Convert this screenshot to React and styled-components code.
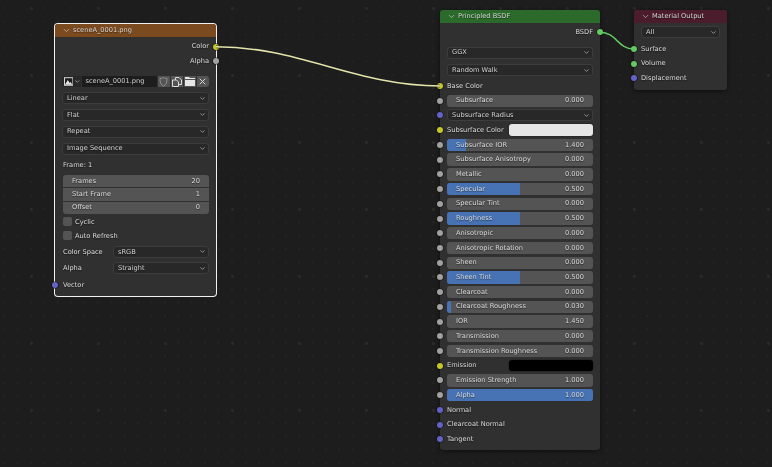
import React from "react";
import styled, { createGlobalStyle } from "styled-components";
import { ChevronDown } from "lucide-react";

const socketColors = { yellow: "#c7c729", grey: "#a1a1a1", blue: "#6363c7", green: "#63c763" };

const GlobalStyle = createGlobalStyle`
  html, body { margin: 0; padding: 0; background: #1d1d1d; }
  body { font-family: "DejaVu Sans", sans-serif; }
`;

const Canvas = styled.div`
  position: relative;
  width: 772px;
  height: 467px;
  overflow: hidden;
  background-color: #1d1d1d;
  background-image:
    radial-gradient(circle at 1.5px 1.5px, #2a2a2a 1.3px, transparent 1.6px),
    radial-gradient(circle at 1px 1px, #242424 0.9px, transparent 1.2px);
  background-size: 67px 67px, 13.4px 13.4px;
  background-position: 30px 7px, 3.4px 7px;
`;

const Wires = styled.svg`
  position: absolute;
  inset: 0;
  pointer-events: none;
`;

const Node = styled.div`
  position: absolute;
  left: ${(p) => p.$x}px;
  top: ${(p) => p.$y}px;
  width: ${(p) => p.$w}px;
  height: ${(p) => p.$h}px;
  box-sizing: border-box;
  background: #303030;
  border-radius: 3px;
  box-shadow: ${(p) => (p.$selected ? "0 0 0 1px #f2f2f2" : "0 1px 4px rgba(0,0,0,.55)")};
  color: #dcdcdc;
  font-size: 6.65px;
  line-height: 1;
  white-space: nowrap;
  text-shadow: 0 1px 1px rgba(0, 0, 0, 0.5);
  filter: blur(0.25px);
`;

const Header = styled.div`
  display: flex;
  align-items: center;
  gap: 2px;
  height: 13px;
  padding-left: 7px;
  background: ${(p) => p.$color};
  border-radius: 3px 3px 0 0;
  color: #d8d8d8;
`;

const Body = styled.div`
  display: flex;
  flex-direction: column;
  padding: ${(p) => p.$pad || "0"};
`;

const Row = styled.div`
  position: relative;
  display: flex;
  align-items: center;
  height: ${(p) => p.$h || 14.72}px;
  box-sizing: border-box;
  padding: 0 7px;
  flex: none;
  justify-content: ${(p) => (p.$right ? "flex-end" : "flex-start")};
`;

const Gap = styled.div`
  height: ${(p) => p.$h}px;
  flex: none;
`;

const Socket = styled.span`
  position: absolute;
  top: 50%;
  ${(p) => (p.$side === "right" ? "right: -3px;" : "left: -3px;")}
  width: 6px;
  height: 6px;
  margin-top: -3px;
  border-radius: 50%;
  background: ${(p) => socketColors[p.$color]};
  box-shadow: 0 0 0 0.6px #111;
  z-index: 2;
`;

const Dropdown = styled.div`
  flex: 1;
  display: flex;
  align-items: center;
  justify-content: space-between;
  height: 12px;
  padding: 0 2px 0 4px;
  background: #282828;
  border: 1px solid #3c3c3c;
  border-radius: 3px;
  box-sizing: border-box;
  color: #d4d4d4;
`;

const Field = styled.div`
  position: relative;
  flex: 1;
  display: flex;
  align-items: center;
  justify-content: space-between;
  height: 12.3px;
  padding: 0 9px;
  background: #545454;
  border-radius: 3px;
  overflow: hidden;
  color: #dcdcdc;
`;

const Fill = styled.span`
  position: absolute;
  left: 0;
  top: 0;
  bottom: 0;
  background: #4772b3;
`;

const FieldText = styled.span`
  position: relative;
  white-space: nowrap;
`;

const Swatch = styled.div`
  width: 84px;
  height: 11.5px;
  margin-left: auto;
  border-radius: 3px;
  background: ${(p) => p.$color};
  box-shadow: 0 0 0 0.5px #222;
`;

const ImageBar = styled.div`
  flex: 1;
  display: flex;
  align-items: stretch;
  height: 11.5px;
  gap: 0.5px;
`;

const ImagePick = styled.div`
  width: 19px;
  flex: none;
  display: flex;
  align-items: center;
  gap: 1px;
  padding-left: 2px;
  box-sizing: border-box;
  background: #282828;
  border-radius: 3px 0 0 3px;
`;

const ImageName = styled.div`
  flex: 1;
  display: flex;
  align-items: center;
  padding-left: 4px;
  background: #1d1d1d;
  color: #d4d4d4;
`;

const IconButton = styled.div`
  width: 12.5px;
  flex: none;
  display: flex;
  align-items: center;
  justify-content: center;
  background: #545454;
  border-radius: ${(p) => (p.$last ? "0 3px 3px 0" : "0")};
`;

const FrameLabel = styled(Row)`
  padding-left: 8px;
`;

const Stack = styled.div`
  display: flex;
  flex-direction: column;
  gap: 1px;
  margin: 2px 7px 1px 8px;
  border-radius: 3px;
  overflow: hidden;
`;

const StackField = styled(Field)`
  flex: none;
  border-radius: 0;
`;

const Check = styled.span`
  width: 9px;
  height: 9px;
  margin: 0 3px 0 0;
  background: #545454;
  border-radius: 2px;
`;

const PropLabel = styled.span`
  width: 50px;
  flex: none;
`;

const Caret = () => <ChevronDown size={7} strokeWidth={2} color="#d8d8d8" />;
const HeadCaret = () => <ChevronDown size={9} strokeWidth={1.6} color="#d8d8d8" />;

const Select = ({ children }) => (
  <Dropdown>
    <span>{children}</span>
    <Caret />
  </Dropdown>
);

const Slider = ({ label, value, fill }) => (
  <Field>
    {fill ? <Fill style={{ width: `${fill * 100}%` }} /> : null}
    <FieldText>{label}</FieldText>
    <FieldText>{value}</FieldText>
  </Field>
);

const ImageIcon = () => (
  <svg width="10" height="9" viewBox="0 0 10 9">
    <rect x="0.5" y="0.5" width="9" height="8" fill="#1d1d1d" stroke="#e6e6e6" />
    <path d="M1 8 L4 3 L6 6 L7 5 L9 8 Z" fill="#e6e6e6" />
  </svg>
);

const ShieldIcon = () => (
  <svg width="9" height="10" viewBox="0 0 9 10">
    <path d="M1 1.5 Q3 1.5 4.5 .7 Q6 1.5 8 1.5 Q8.3 7 4.5 9.2 Q.7 7 1 1.5 Z" fill="none" stroke="#8f8f8f" />
  </svg>
);

const CopyIcon = () => (
  <svg width="10" height="10" viewBox="0 0 10 10">
    <path d="M3.5 .5 H7 L9.5 3 V7.5 H6.5 M3.5 .5 V3" fill="none" stroke="#dcdcdc" />
    <path d="M.5 3 H4.5 L6.5 5 V9.5 H.5 Z" fill="none" stroke="#dcdcdc" />
  </svg>
);

const FolderIcon = () => (
  <svg width="10" height="9" viewBox="0 0 10 9">
    <path d="M0 0 H4 L5 1 H10 V2 H0 Z M0 3 H10 V9 H0 Z" fill="#e6e6e6" />
  </svg>
);

const CloseIcon = () => (
  <svg width="7" height="7" viewBox="0 0 7 7">
    <path d="M.7 .7 L6.3 6.3 M6.3 .7 L.7 6.3" stroke="#d8d8d8" strokeWidth="1" />
  </svg>
);

const bsdfRows = [
  { socket: "grey", label: "Subsurface", value: "0.000" },
  { socket: "blue", select: "Subsurface Radius" },
  { socket: "yellow", label: "Subsurface Color", swatch: "#e6e6e6" },
  { socket: "grey", label: "Subsurface IOR", value: "1.400", fill: 0.13 },
  { socket: "grey", label: "Subsurface Anisotropy", value: "0.000" },
  { socket: "grey", label: "Metallic", value: "0.000" },
  { socket: "grey", label: "Specular", value: "0.500", fill: 0.5 },
  { socket: "grey", label: "Specular Tint", value: "0.000" },
  { socket: "grey", label: "Roughness", value: "0.500", fill: 0.5 },
  { socket: "grey", label: "Anisotropic", value: "0.000" },
  { socket: "grey", label: "Anisotropic Rotation", value: "0.000" },
  { socket: "grey", label: "Sheen", value: "0.000" },
  { socket: "grey", label: "Sheen Tint", value: "0.500", fill: 0.5 },
  { socket: "grey", label: "Clearcoat", value: "0.000" },
  { socket: "grey", label: "Clearcoat Roughness", value: "0.030", fill: 0.03 },
  { socket: "grey", label: "IOR", value: "1.450" },
  { socket: "grey", label: "Transmission", value: "0.000" },
  { socket: "grey", label: "Transmission Roughness", value: "0.000" },
  { socket: "yellow", label: "Emission", swatch: "#000000" },
  { socket: "grey", label: "Emission Strength", value: "1.000" },
  { socket: "grey", label: "Alpha", value: "1.000", fill: 1 },
  { socket: "blue", text: "Normal" },
  { socket: "blue", text: "Clearcoat Normal" },
  { socket: "blue", text: "Tangent" },
];

const BsdfRow = ({ row }) => {
  let content;
  if (row.select) content = <Select>{row.select}</Select>;
  else if (row.swatch) content = (
    <>
      <span>{row.label}</span>
      <Swatch $color={row.swatch} />
    </>
  );
  else if (row.text) content = <span>{row.text}</span>;
  else content = <Slider label={row.label} value={row.value} fill={row.fill} />;
  return (
    <Row>
      <Socket $color={row.socket} />
      {content}
    </Row>
  );
};

export default function App() {
  return (
    <Canvas>
      <GlobalStyle />
      <Node $x={55} $y={24} $w={161} $h={271.5} $selected>
        <Header $color="#7b4a1e">
          <HeadCaret />
          sceneA_0001.png
        </Header>
        <Body $pad="2.5px 0 0">
          <Row $right $h={14.5}>Color<Socket $side="right" $color="yellow" /></Row>
          <Row $right $h={14.5}>Alpha<Socket $side="right" $color="grey" /></Row>
          <Gap $h={4.75} />
          <Row $h={16.5}>
            <ImageBar>
              <ImagePick><ImageIcon /><Caret /></ImagePick>
              <ImageName>sceneA_0001.png</ImageName>
              <IconButton><ShieldIcon /></IconButton>
              <IconButton><CopyIcon /></IconButton>
              <IconButton><FolderIcon /></IconButton>
              <IconButton $last><CloseIcon /></IconButton>
            </ImageBar>
          </Row>
          <Row $h={16.8}><Select>Linear</Select></Row>
          <Row $h={16.8}><Select>Flat</Select></Row>
          <Row $h={16.8}><Select>Repeat</Select></Row>
          <Row $h={16.8}><Select>Image Sequence</Select></Row>
          <FrameLabel $h={16}>Frame: 1</FrameLabel>
          <Stack>
            <StackField><FieldText>Frames</FieldText><FieldText>20</FieldText></StackField>
            <StackField><FieldText>Start Frame</FieldText><FieldText>1</FieldText></StackField>
            <StackField><FieldText>Offset</FieldText><FieldText>0</FieldText></StackField>
          </Stack>
          <FrameLabel $h={14}><Check />Cyclic</FrameLabel>
          <FrameLabel $h={14}><Check />Auto Refresh</FrameLabel>
          <Gap $h={1} />
          <FrameLabel $h={16.3}><PropLabel>Color Space</PropLabel><Select>sRGB</Select></FrameLabel>
          <FrameLabel $h={16.3}><PropLabel>Alpha</PropLabel><Select>Straight</Select></FrameLabel>
          <FrameLabel $h={17}><Socket $color="blue" />Vector</FrameLabel>
        </Body>
      </Node>

      <Node $x={440} $y={10} $w={160} $h={440}>
        <Header $color="#2b6a2b">
          <HeadCaret />
          Principled BSDF
        </Header>
        <Body>
          <Row $right $h={18.6}>BSDF<Socket $side="right" $color="green" /></Row>
          <Gap $h={2.5} />
          <Row $h={17.3}><Select>GGX</Select></Row>
          <Row $h={17.3}><Select>Random Walk</Select></Row>
          <Row><Socket $color="yellow" />Base Color</Row>
          {bsdfRows.map((row) => (
            <BsdfRow key={row.label || row.select || row.text} row={row} />
          ))}
        </Body>
      </Node>

      <Node $x={634} $y={10} $w={93} $h={79.5}>
        <Header $color="#4a1c2c">
          <HeadCaret />
          Material Output
        </Header>
        <Body>
          <Row $h={18.6}><Select>All</Select></Row>
          <Row><Socket $color="green" />Surface</Row>
          <Row><Socket $color="green" />Volume</Row>
          <Row><Socket $color="blue" />Displacement</Row>
        </Body>
      </Node>

      <Wires width="772" height="467" viewBox="0 0 772 467">
        <path d="M216 46.7 C300 46.7 355 86 440 86" fill="none" stroke="#1d1d1d" strokeOpacity="0.7" strokeWidth="3" />
        <path d="M216 46.7 C300 46.7 355 86 440 86" fill="none" stroke="#e4e4ab" strokeWidth="1.5" />
        <path d="M600 32.3 C617 32.3 617 49 634 49" fill="none" stroke="#63c763" strokeWidth="1.5" />
      </Wires>
    </Canvas>
  );
}
